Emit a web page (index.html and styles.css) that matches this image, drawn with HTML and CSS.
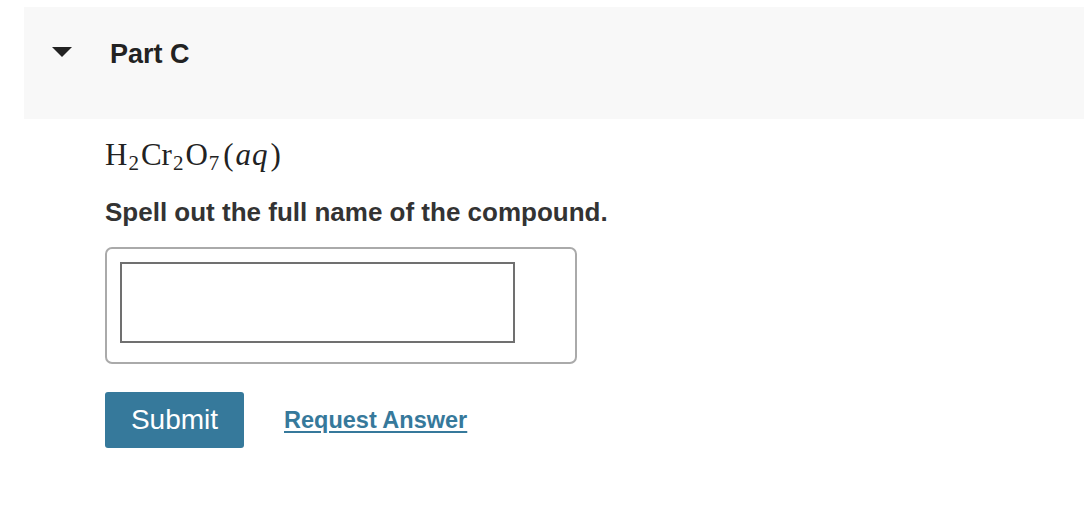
FILE: index.html
```html
<!DOCTYPE html>
<html lang="en">
<head>
  <meta charset="UTF-8" />
  <title>Part C</title>
  <link rel="stylesheet" href="styles.css">
</head>
<body>
  <div class="part-header">
    <span class="toggle"></span>
    <h2>Part C</h2>
  </div>

  <div class="part-body">
    <div class="formula">H<sub>2</sub>Cr<sub>2</sub>O<sub>7</sub><span class="paren">(</span><i>aq</i><span class="paren">)</span></div>
    <p class="prompt">Spell out the full name of the compound.</p>

    <div class="answer-box">
      <input type="text" class="answer-input" />
    </div>

    <div class="actions">
      <button class="submit-btn">Submit</button>
      <a href="#" class="request-link">Request Answer</a>
    </div>
  </div>
</body>
</html>
```

FILE: styles.css
```css
body {
  margin: 0;
  font-family: "Liberation Sans", Arial, sans-serif;
  color: #333;
  background: #fff;
}

.part-header {
  margin: 7px 0 0 24px;
  height: 112px;
  background: #f8f8f8;
  display: flex;
  align-items: flex-start;
}

.toggle {
  width: 0;
  height: 0;
  border-left: 10px solid transparent;
  border-right: 10px solid transparent;
  border-top: 10px solid #222;
  margin: 40px 0 0 28px;
}

.part-header h2 {
  margin: 32px 0 0 38px;
  font-size: 27px;
  font-weight: bold;
  color: #222;
}

.part-body {
  padding-left: 105px;
}

.formula {
  margin-top: 17px;
  font-family: "Liberation Serif", "Times New Roman", serif;
  font-size: 31px;
  line-height: 38px;
  height: 38px;
  color: #222;
}

.formula sub {
  font-size: 21px;
  vertical-align: -5px;
  line-height: 0;
  margin: 0 2px 0 1px;
}

.formula .paren {
  margin: 0 2px;
}

.formula i {
  letter-spacing: 1px;
}

.prompt {
  margin: 23px 0 0;
  font-size: 26px;
  font-weight: bold;
  color: #333;
}

.answer-box {
  margin-top: 19px;
  width: 472px;
  height: 117px;
  border: 2px solid #aaa;
  border-radius: 7px;
  box-sizing: border-box;
  padding: 13px 0 0 13px;
}

.answer-input {
  width: 395px;
  height: 81px;
  box-sizing: border-box;
  border: 2px solid #707070;
  margin: 0;
  padding: 4px 8px;
  font-size: 20px;
  outline: none;
  display: block;
}

.actions {
  margin-top: 28px;
  display: flex;
  align-items: center;
  gap: 40px;
}

.submit-btn {
  background-color: #36799b;
  color: white;
  border: none;
  border-radius: 3px;
  width: 139px;
  height: 56px;
  font-family: "Liberation Sans", Arial, sans-serif;
  font-size: 28px;
  cursor: pointer;
}

.request-link {
  color: #36799b;
  font-size: 23.5px;
  font-weight: bold;
  text-decoration: underline;
  text-underline-offset: 3px;
}
```
